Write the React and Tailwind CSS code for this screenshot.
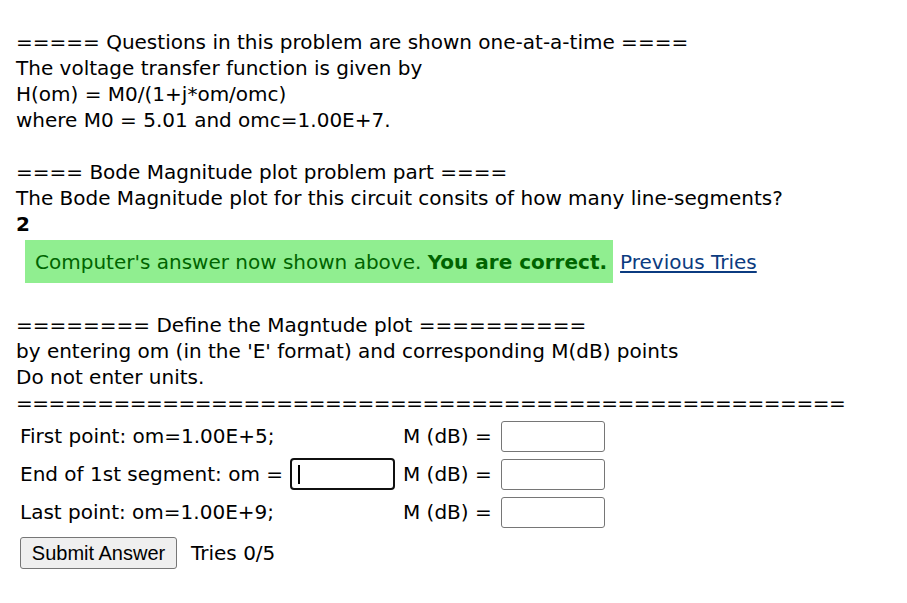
export default function App() {
  const verdana = { fontFamily: '"DejaVu Sans", Verdana, sans-serif' };
  const box = 'h-[31px] w-[104px] rounded-[3px] border border-[#767676] bg-white outline-none';
  return (
    <div
      className="min-h-[603px] bg-white pl-4 pt-[29px] text-[20px] leading-[26px] text-black"
      style={verdana}
    >
      <div>===== Questions in this problem are shown one-at-a-time ====</div>
      <div>The voltage transfer function is given by</div>
      <div>H(om) = M0/(1+j*om/omc)</div>
      <div>where M0 = 5.01 and omc=1.00E+7.</div>
      <div className="h-[26px]" />
      <div>==== Bode Magnitude plot problem part ====</div>
      <div>The Bode Magnitude plot for this circuit consits of how many line-segments?</div>
      <div className="font-bold">2</div>
      <div className="mt-[3px] flex items-center">
        <div className="ml-[9px] flex h-[43px] items-center bg-[#90ee90] pl-[10px] pr-[6px] text-[#006400]">
          Computer's answer now shown above.&nbsp;<b>You are correct.</b>
        </div>
        <a href="#" className="ml-[7px] text-[#0b3b80] underline underline-offset-2">
          Previous Tries
        </a>
      </div>
      <div className="h-[29px]" />
      <div>======== Define the Magntude plot ==========</div>
      <div>by entering om (in the 'E' format) and corresponding M(dB) points</div>
      <div>Do not enter units.</div>
      <div className="tracking-[-0.5px]">===================================================</div>
      <div className="mt-[4px] grid grid-cols-[270px_113px_98px_104px] items-center gap-y-[6px] pl-1">
        <span className="col-span-2 flex h-[32px] items-center">First point: om=1.00E+5;</span>
        <span>M (dB) =</span>
        <input className={box} />

        <span>End of 1st segment: om =</span>
        <div className="relative h-[32px] w-[105px] rounded-[4px] border-2 border-[#101010] bg-white">
          <span className="absolute left-[6px] top-[5px] h-[19px] w-[2px] bg-black" />
        </div>
        <span>M (dB) =</span>
        <input className={box} />

        <span className="col-span-2 flex h-[32px] items-center">Last point: om=1.00E+9;</span>
        <span>M (dB) =</span>
        <input className={box} />
      </div>
      <div className="mt-[9px] flex items-center pl-1">
        <button
          className="h-[32px] w-[157px] rounded-[3px] border border-[#767676] bg-[#efefef] text-[20px] text-black"
          style={{ fontFamily: '"Liberation Sans", Arial, sans-serif' }}
        >
          Submit Answer
        </button>
        <span className="ml-[14px]">Tries 0/5</span>
      </div>
    </div>
  );
}
